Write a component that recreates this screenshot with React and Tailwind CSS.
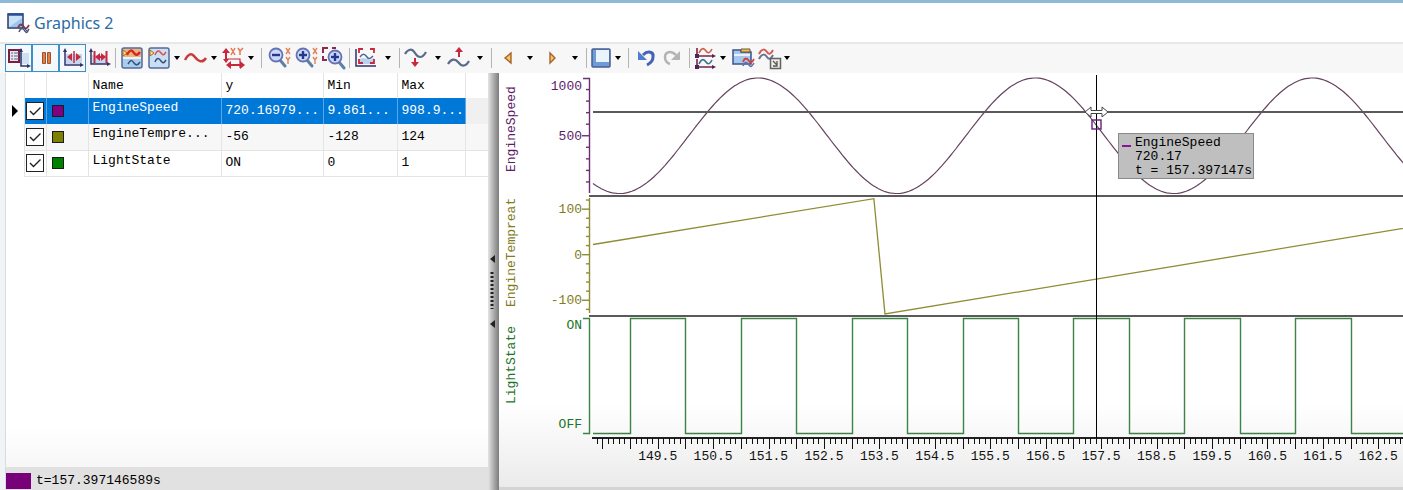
import { useEffect, useRef, useState } from 'react';

const NAVY = '#2f3268';
const RED = '#c8283c';

/* Toolbar icons, all on a 24 x 24 grid */
const Icon = ({ children }) => (
    <svg viewBox="0 0 24 24" className="w-6 h-6 shrink-0" fill="none" aria-hidden="true">
        {children}
    </svg>
);

const Axis = () => (
    <>
        <path d="M4 4V19H21" stroke={NAVY} strokeWidth="1.5" />
        <path d="M2 6L4 2L6 6ZM19 17L23 19L19 21Z" fill={NAVY} />
    </>
);

const LegendIcon = () => (
    <Icon>
        <path d="M13 7H22V18H13Z" fill="#cfe0f5" />
        <path d="M2 4H12V16H2Z" fill="#e9e6ee" stroke="#7c1f3f" strokeWidth="2" />
        <path d="M4 7H6M7 7H12M4 10H6M7 10H12M4 13H6M7 13H12" stroke="#55648c" />
        <path d="M14 3V20H22" stroke={NAVY} strokeWidth="1.5" />
        <path d="M12 6L14 2L16 6ZM20 18L24 20L20 22Z" fill={NAVY} />
    </Icon>
);

const PauseIcon = () => (
    <Icon>
        <path d="M8.5 6.5H11.5V17.5H8.5ZM13.5 6.5H16.5V17.5H13.5Z" fill="#e08040" stroke="#a5502c" />
    </Icon>
);

const CursorIcon = () => (
    <Icon>
        <path d="M5 8H21V18H5Z" fill="#c5d7f0" />
        <Axis />
        <path d="M13 5V17" stroke={RED} strokeWidth="1.5" />
        <path d="M11 7V15L6 11ZM15 7V15L20 11Z" fill={RED} />
    </Icon>
);

const DiffCursorIcon = () => (
    <Icon>
        <path d="M4 9H19V18H4Z" fill="#c5d7f0" />
        <path d="M3 4V18H21" stroke={NAVY} strokeWidth="1.5" />
        <path d="M1 6L3 2L5 6ZM19 16L23 18L19 20Z" fill={NAVY} />
        <path d="M6.5 5V17M18.5 5V17M8 11H17" stroke={RED} strokeWidth="2" />
        <path d="M12 7V15L7 11ZM13 7V15L18 11Z" fill={RED} />
    </Icon>
);

const SplitViewIcon = () => (
    <Icon>
        <rect x="2" y="2" width="20" height="20" rx="2" fill="#a9cdec" stroke="#536b9c" strokeWidth="1.5" />
        <path d="M3 3H21V11H3Z" fill="#f2b27c" />
        <path d="M3 4L7 7L3 10Z" fill="#ffe680" stroke="#a56a20" />
        <path d="M7 9C10 3 12 4 14 7S18 9 20 6" stroke="#d42a1c" strokeWidth="2.5" />
        <path d="M3 12H21" stroke="#fff" strokeWidth="1.5" />
        <path d="M8 18C11 13 12 14 14 17S18 19 20 16" stroke="#35517c" strokeWidth="1.5" />
    </Icon>
);

const OverlayViewIcon = () => (
    <Icon>
        <rect x="2" y="2" width="20" height="20" rx="2" fill="#cbdff4" stroke="#536b9c" strokeWidth="1.5" />
        <path d="M3 4L7 7L3 10Z" fill="#ffe680" stroke="#a56a20" />
        <path d="M8 9C10 4 12 4 14 7S17 9 19 6" stroke="#dd5548" strokeWidth="1.5" />
        <path d="M8 16C10 11 12 12 14 15S17 17 19 14" stroke="#35517c" strokeWidth="1.5" />
    </Icon>
);

const WaveIcon = () => (
    <Icon>
        <path d="M1 14C4 8 7 7 10 10C14 15 18 18 22 12" stroke="#c93a3a" strokeWidth="2.5" />
    </Icon>
);

const XYIcon = () => (
    <Icon>
        <path d="M5 5V14M9 19H20" stroke={RED} strokeWidth="2" />
        <path d="M1 7L5 2L9 7ZM2 13L5 17L8 13ZM10 15L5 19L10 23ZM19 15L24 19L19 23Z" fill={RED} />
        <path d="M4 13H19V22" stroke={RED} strokeWidth="1.2" />
        <path d="M10 2L14 9M14 2L10 9M17 2L19 5L22 2M19 5V9" stroke="#e27850" strokeWidth="1.5" />
    </Icon>
);

const Lens = ({ plus, x = 8, y = 9 }) => (
    <>
        <path d={`M${x + 4} ${y + 5}L${x + 9} ${y + 11}`} stroke="#5b81a6" strokeWidth="3" strokeLinecap="round" />
        <circle cx={x} cy={y} r="6.5" fill="#cbd9f5" stroke="#6572b8" strokeWidth="1.8" />
        <path d={`M${x - 4} ${y}H${x + 4}`} stroke="#27378c" strokeWidth="2.4" />
        {plus && <path d={`M${x} ${y - 4}V${y + 4}`} stroke="#27378c" strokeWidth="2.4" />}
    </>
);

const ZoomXYIcon = ({ plus }) => (
    <Icon>
        <Lens plus={plus} />
        <path d="M18 2L22 8M22 2L18 8M18 11L20 14L22 11M20 14V18" stroke="#e0835e" strokeWidth="1.4" />
    </Icon>
);

const ZoomAreaIcon = () => (
    <Icon>
        <path d="M1 7V2H6M10 2H14M1 10V14H5" stroke="#8f2950" strokeWidth="2" />
        <Lens plus x={13} y={11} />
    </Icon>
);

const FitIcon = () => (
    <Icon>
        <path d="M4 13L10 12L16 14L20 12V18H4Z" fill="#b5d2f1" />
        <path d="M2 3V20H22" stroke={NAVY} strokeWidth="1.5" />
        <path d="M5 7V3H9M16 3H20V7M5 13V17H9M16 17H20V13" stroke={RED} strokeWidth="1.8" />
        <path d="M6 11C9 7 11 8 13 11S17 12 19 10" stroke="#50678f" strokeWidth="1.5" />
    </Icon>
);

const WaveDownIcon = () => (
    <Icon>
        <path d="M1 8C4 3 8 2 11 7S18 13 22 6" stroke="#5b6b8c" strokeWidth="2.2" />
        <path d="M11 12V18" stroke={RED} strokeWidth="2" />
        <path d="M7 16H15L11 21Z" fill={RED} />
    </Icon>
);

const WaveUpIcon = () => (
    <Icon>
        <path d="M1 18C4 13 8 12 11 16S18 22 22 15" stroke="#5b6b8c" strokeWidth="2.2" />
        <path d="M12 5V11" stroke={RED} strokeWidth="2" />
        <path d="M8 6H16L12 1Z" fill={RED} />
    </Icon>
);

const PrevIcon = () => (
    <Icon>
        <path d="M15 7V17L9 12Z" fill="#f7c469" stroke="#a5642a" strokeWidth="1.4" />
    </Icon>
);

const NextIcon = () => (
    <Icon>
        <path d="M9 7V17L14 12Z" fill="#f7c469" stroke="#a5642a" strokeWidth="1.4" />
    </Icon>
);

const PanelIcon = () => (
    <Icon>
        <rect x="3" y="3" width="18" height="18" rx="1" fill="#6f9bd6" stroke="#4a5f91" strokeWidth="1.5" />
        <path d="M7 4H20V16H7Z" fill="#eaf4fd" />
    </Icon>
);

const UndoIcon = () => (
    <Icon>
        <path d="M8 9C13 4 19 6 18 11C18 14 16 17 12 19" stroke="#4263b6" strokeWidth="3" />
        <path d="M3 5V14H12Z" fill="#4f7dd0" />
    </Icon>
);

const RedoIcon = () => (
    <Icon>
        <path d="M16 9C11 4 5 6 5 11C5 14 7 17 10 18" stroke="#b4b4b4" strokeWidth="2.5" />
        <path d="M20 5V14H11Z" fill="#b4b4b4" />
    </Icon>
);

const StackedAxesIcon = () => (
    <Icon>
        <path d="M3 2V10H20M3 13V21H20" stroke="#7b2446" strokeWidth="1.6" />
        <path d="M1 8H5V12H1ZM1 19H5V23H1ZM18 8L22 10L18 12ZM18 19L22 21L18 23Z" fill="#4d2455" />
        <path d="M5 7C8 1 10 2 12 5S16 7 18 3" stroke="#d65a46" strokeWidth="1.6" />
        <path d="M5 18C8 12 10 13 12 16S16 18 18 14" stroke="#3c7186" strokeWidth="1.6" />
    </Icon>
);

const FolderIcon = () => (
    <Icon>
        <path d="M2 4H10V6H20V18H2Z" fill="#a6c8f0" stroke="#3e5488" strokeWidth="1.5" />
        <path d="M10 3H19V6H10Z" fill="#f0c050" stroke="#6e5632" />
        <path d="M3 9H19" stroke="#e7f3ff" strokeWidth="2" />
        <path d="M12 16C14 11 16 12 18 15S21 16 23 13" stroke="#d2403a" strokeWidth="1.8" />
        <path d="M12 20C14 15 16 16 18 19S21 20 23 17" stroke="#5e6fa8" strokeWidth="1.5" />
    </Icon>
);

const ExportIcon = () => (
    <Icon>
        <path d="M1 8C4 2 7 3 9 6S13 8 15 4" stroke="#d65a56" strokeWidth="2" />
        <path d="M1 13C4 7 7 8 9 11S13 13 15 9" stroke="#6a7390" strokeWidth="2" />
        <rect x="12.5" y="12.5" width="10" height="10" fill="#ecece6" stroke="#626262" strokeWidth="1.5" />
        <path d="M15 15L19 19M19 15V20H15" stroke="#555" strokeWidth="1.3" />
    </Icon>
);

const WindowIcon = () => (
    <svg viewBox="0 0 24 22" className="w-6 h-[22px] shrink-0" fill="none" aria-hidden="true">
        <rect x="2" y="2" width="15" height="14" fill="#c9e2f7" stroke="#33456f" strokeWidth="1.6" />
        <path d="M2 2.5H17" stroke="#2a4f96" strokeWidth="2.5" />
        <path d="M3 15L16 6V15Z" fill="#9cc6ec" />
        <path d="M12 16C14 11 16 12 18 15S21 16 23 13" stroke="#8c3448" strokeWidth="1.8" />
        <path d="M13 20C15 15 17 16 19 19S21 20 23 17" stroke="#45557a" strokeWidth="1.5" />
        <path d="M14 12L21 19" stroke="#45557a" />
    </svg>
);

const toolbar = [
    { icon: LegendIcon, label: 'Legend', framed: true },
    { icon: PauseIcon, label: 'Pause', framed: true },
    { icon: CursorIcon, label: 'Measurement cursor', framed: true },
    { icon: DiffCursorIcon, label: 'Difference cursor' },
    { sep: 'w-[5px]' },
    { icon: SplitViewIcon, label: 'Separate view' },
    { icon: OverlayViewIcon, label: 'Overlay view' },
    { menu: 'w-[10px]', label: 'View options' },
    { icon: WaveIcon, label: 'Line type' },
    { menu: 'w-[10px]', label: 'Line options' },
    { icon: XYIcon, label: 'Axis zoom' },
    { menu: 'w-[10px]', label: 'Axis options' },
    { sep: 'w-[10px]' },
    { icon: ZoomXYIcon, label: 'Zoom out' },
    { icon: ZoomXYIcon, plus: true, label: 'Zoom in' },
    { icon: ZoomAreaIcon, label: 'Zoom area' },
    { sep: 'w-[5px]' },
    { icon: FitIcon, label: 'Fit' },
    { menu: 'w-[18px]', label: 'Fit options' },
    { sep: 'w-[5px]' },
    { icon: WaveDownIcon, label: 'Move down' },
    { menu: 'w-[18px]', label: 'Move down options' },
    { icon: WaveUpIcon, label: 'Move up', width: 'w-6' },
    { menu: 'w-[18px]', label: 'Move up options' },
    { sep: 'w-[5px]' },
    { icon: PrevIcon, label: 'Previous' },
    { menu: 'w-[18px]', label: 'Previous options' },
    { icon: NextIcon, label: 'Next' },
    { menu: 'w-[18px]', label: 'Next options' },
    { sep: 'w-[5px]' },
    { icon: PanelIcon, label: 'Layout', width: 'w-6' },
    { menu: 'w-[10px]', label: 'Layout options' },
    { sep: 'w-[10px]' },
    { icon: UndoIcon, label: 'Undo' },
    { icon: RedoIcon, label: 'Redo', width: 'w-6' },
    { sep: 'w-[10px]' },
    { icon: StackedAxesIcon, label: 'Y axes', width: 'w-6' },
    { menu: 'w-[10px]', label: 'Y axes options' },
    { icon: FolderIcon, label: 'Open', width: 'w-[30px]' },
    { icon: ExportIcon, label: 'Export', width: 'w-6' },
    { menu: 'w-[10px]', label: 'Export options' },
];

const Toolbar = () => (
    <div className="h-[31px] flex items-center pl-[5px] pb-px bg-[#f7f7f7] border-t-2 border-[#e6e8ea]">
        {toolbar.map((item, i) => {
            if (item.sep) {
                return (
                    <div key={i} className={`${item.sep} shrink-0 flex justify-center`}>
                        <div className="w-px h-5 bg-[#b4b4b4]"></div>
                    </div>
                );
            }
            if (item.menu) {
                return (
                    <button key={i} aria-label={item.label} className={`${item.menu} h-7 shrink-0 flex items-center justify-center`}>
                        <svg viewBox="0 0 6 4" className="w-1.5 h-1 shrink-0">
                            <path d="M0 0H6L3 4Z" fill="#000" />
                        </svg>
                    </button>
                );
            }
            const ItemIcon = item.icon;
            return (
                <button
                    key={i}
                    aria-label={item.label}
                    className={`${item.width || 'w-[27px]'} h-7 shrink-0 flex items-center justify-center ${item.framed ? 'border border-[#3f8fc6] bg-[#f4f9fd]' : ''}`}
                >
                    <ItemIcon plus={item.plus} />
                </button>
            );
        })}
    </div>
);

const initialSignals = [
    { name: 'EngineSpeed', short: 'EngineSpeed', color: 'bg-[#800080]', y: '720.16979...', min: '9.861...', max: '998.9...', on: true },
    { name: 'EngineTempreature', short: 'EngineTempre...', color: 'bg-[#808000]', y: '-56', min: '-128', max: '124', on: true },
    { name: 'LightState', short: 'LightState', color: 'bg-[#008000]', y: 'ON', min: '0', max: '1', on: true },
];

const SignalTable = () => {
    const [signals, setSignals] = useState(initialSignals);
    const [selected, setSelected] = useState(0);

    const toggle = (index) => {
        setSignals(signals.map((s, i) => (i === index ? { ...s, on: !s.on } : s)));
    };

    return (
        <table className="w-full table-fixed border-collapse text-left whitespace-nowrap">
            <colgroup>
                <col className="w-[18px]" />
                <col className="w-[22px]" />
                <col className="w-[42px]" />
                <col className="w-[133px]" />
                <col className="w-[102px]" />
                <col className="w-[74px]" />
                <col className="w-[68px]" />
                <col />
            </colgroup>
            <thead>
                <tr className="h-[25px]">
                    <th className="border-r border-[#e4e4e4]"></th>
                    <th className="border-r border-[#e4e4e4]"></th>
                    <th className="border-r border-[#e4e4e4]"></th>
                    {['Name', 'y', 'Min', 'Max'].map((title) => (
                        <th key={title} className="p-0 pl-1 font-normal border-r border-[#e4e4e4]">{title}</th>
                    ))}
                    <th></th>
                </tr>
            </thead>
            <tbody>
                {signals.map((s, i) => {
                    const active = i === selected;
                    const cell = active
                        ? 'p-0 border-r border-[#5da6e6] bg-[#0078d7] text-white'
                        : `p-0 border-r border-b border-[#e4e4e4] ${i % 2 ? 'bg-[#f7f7f7]' : ''}`;
                    return (
                        <tr key={s.name} className="h-[26px]" onClick={() => setSelected(i)}>
                            <td className="p-0 border-r border-[#e4e4e4]">
                                {active && (
                                    <svg viewBox="0 0 6 12" className="w-1.5 h-3 ml-1.5">
                                        <path d="M0 0V12L6 6Z" fill="#000" />
                                    </svg>
                                )}
                            </td>
                            <td className={cell}>
                                <label className="relative block w-[18px] h-[18px] mx-auto">
                                    <input
                                        type="checkbox"
                                        aria-label={s.name}
                                        checked={s.on}
                                        onChange={() => toggle(i)}
                                        className="appearance-none block w-[18px] h-[18px] bg-white border border-[#222]"
                                    />
                                    {s.on && (
                                        <svg viewBox="0 0 18 18" className="absolute inset-0 pointer-events-none">
                                            <path d="M4 9L7.5 12.5L14.5 5.5" fill="none" stroke="#222" strokeWidth="1.4" />
                                        </svg>
                                    )}
                                </label>
                            </td>
                            <td className={cell}>
                                <div className={`w-3 h-3 ml-[5px] border border-[#1c1c1c] ${s.color}`}></div>
                            </td>
                            <td className={`${cell} align-top`}>
                                <div className="pl-1 leading-5">{s.short}</div>
                            </td>
                            <td className={cell}><div className="pl-1">{s.y}</div></td>
                            <td className={cell}><div className="pl-1">{s.min}</div></td>
                            <td className={cell}><div className="pl-1">{s.max}</div></td>
                            <td className={active ? 'p-0 bg-[#f0f0f0]' : `p-0 border-b border-[#e4e4e4] ${i % 2 ? 'bg-[#f7f7f7]' : ''}`}></td>
                        </tr>
                    );
                })}
            </tbody>
        </table>
    );
};

/* Chart: time axis in seconds, pixels measured from the chart's left edge */
const PX_PER_SEC = 55.43;
const PLOT_LEFT = 94;
const AXIS_X = 90.5;
const CURSOR_T = 157.4;

const xOf = (t) => 158.7 + (t - 149.5) * PX_PER_SEC;
const tOf = (x) => 149.5 + (x - 158.7) / PX_PER_SEC;
const speedY = (v) => 120.5 - v * 0.1155;
const tempY = (v) => 181.7 - v * 0.4555;

const speedPath = (tEnd) => {
    const points = [];
    for (let t = tOf(PLOT_LEFT); t < tEnd; t += 0.05) {
        const v = 500 + 500 * Math.cos((2 * Math.PI * (t - 151.31)) / 5);
        points.push(`${xOf(t).toFixed(1)},${speedY(v).toFixed(1)}`);
    }
    return points.join(' ');
};

const tempPath = (tEnd) => {
    const points = [`${PLOT_LEFT},171.5`];
    for (let t = 153.4; t < tEnd + 12.8; t += 12.8) {
        points.push(`${xOf(t)},${tempY(123)}`, `${xOf(t + 0.2)},${tempY(-130)}`);
    }
    return points.join(' ');
};

const lightPath = (tEnd) => {
    let d = `M${PLOT_LEFT} 360.5`;
    for (let t = 149; t < tEnd + 2; t += 2) {
        d += `H${Math.round(xOf(t)) + 0.5}V245.5H${Math.round(xOf(t + 1)) + 0.5}V360.5`;
    }
    return d;
};

const Chart = () => {
    const ref = useRef(null);
    const [width, setWidth] = useState(904);

    useEffect(() => {
        const observer = new ResizeObserver(([entry]) => setWidth(entry.contentRect.width));
        observer.observe(ref.current);
        return () => observer.disconnect();
    }, []);

    const tEnd = tOf(width) + 0.1;
    const ticks = [];
    for (let n = 1484; n / 10 < tEnd; n++) ticks.push(n);
    // only labels that fit completely
    const labels = ticks.filter((n) => n % 10 === 5 && n > 1485 && xOf(n / 10) + 20 <= width);

    return (
        <div ref={ref}>
            <svg className="block w-full h-[414px]" fill="none" fontSize="13" role="img" aria-label="Signal curves over time">
                {/* EngineSpeed */}
                <g stroke="#6b2f72" strokeWidth="1.4">
                    <path d={`M84 5.5H${AXIS_X}V120`} />
                    {[100, 200, 300, 400, 600, 700, 800, 900].map((v) => (
                        <path key={v} d={`M87 ${speedY(v)}H${AXIS_X}`} />
                    ))}
                    <path d={`M83 ${speedY(500)}H${AXIS_X}`} />
                    <polyline points={speedPath(tEnd)} stroke="#65435f" strokeWidth="1.2" />
                </g>
                <g fill="#5c1c68">
                    <text x="83" y="17" textAnchor="end">1000</text>
                    <text x="83" y="67" textAnchor="end">500</text>
                    <text transform="translate(16 99) rotate(-90)">EngineSpeed</text>
                </g>

                {/* EngineTempreature */}
                <g stroke="#8f8c34" strokeWidth="1.4">
                    <path d={`M${AXIS_X} 125V240`} />
                    {[-120, -80, -60, -40, -20, 20, 40, 60, 80, 120].map((v) => (
                        <path key={v} d={`M87 ${tempY(v)}H${AXIS_X}`} />
                    ))}
                    {[-100, 0, 100].map((v) => (
                        <path key={v} d={`M83 ${tempY(v)}H${AXIS_X}`} />
                    ))}
                    <polyline points={tempPath(tEnd)} strokeWidth="1.3" />
                </g>
                <g fill="#7f7c1c">
                    {[-100, 0, 100].map((v) => (
                        <text key={v} x="83" y={Math.round(tempY(v)) + 4} textAnchor="end">{v}</text>
                    ))}
                    <text transform="translate(16 234) rotate(-90)">EngineTempreat</text>
                </g>

                {/* LightState */}
                <g stroke="#3c8444" strokeWidth="1.4">
                    <path d={`M84 245.5H${AXIS_X}V360.5H84`} />
                    <path d={lightPath(tEnd)} />
                </g>
                <g fill="#1c7428">
                    <text x="83" y="256" textAnchor="end">ON</text>
                    <text x="83" y="355" textAnchor="end">OFF</text>
                    <text transform="translate(16 331) rotate(-90)">LightState</text>
                </g>

                {/* Separators and level line */}
                <rect x="90" y="122" width="100%" height="2" fill="#5a5a5a" />
                <rect x="90" y="242" width="100%" height="2" fill="#5a5a5a" />
                <rect x={PLOT_LEFT} y="38" width="100%" height="2" fill="#5a5a5a" />

                {/* Time axis */}
                <rect x="93" y="364" width="100%" height="2" fill="#222" />
                {ticks.map((n) => (
                    <rect
                        key={n}
                        x={Math.round(xOf(n / 10))}
                        y="365"
                        width="1"
                        height={n % 5 === 0 ? 11 : 6}
                        fill="#111"
                    />
                ))}
                {labels.map((n) => (
                    <text key={n} x={xOf(n / 10)} y="387" textAnchor="middle" fill="#111">{(n / 10).toFixed(1)}</text>
                ))}

                {/* Measurement cursor */}
                <path d={`M${Math.round(xOf(CURSOR_T)) + 0.5} 2V365`} stroke="#000" />
                <rect x="593" y="47" width="9" height="9" stroke="#6b1c78" strokeWidth="1.4" />
                <path
                    d="M586 39L592 34V37.5H603V34L609 39L603 44V40.5H592V44Z"
                    fill="#fff"
                    stroke="#444"
                />
            </svg>
        </div>
    );
};

const Splitter = () => (
    <div className="w-[11px] shrink-0 bg-linear-to-r from-[#e4e4e4] to-[#7c7c7c]">
        <svg viewBox="0 0 11 80" className="w-[11px] h-20 mt-[178px]" aria-hidden="true">
            <path d="M7 4V12L2 8ZM7 69V77L2 73Z" fill="#222" />
            <path d="M4 21V58" stroke="#222" strokeWidth="3" strokeDasharray="2 2" />
        </svg>
    </div>
);

const App = () => (
    <div className="min-h-screen flex flex-col bg-white text-black text-[13px] leading-4 font-['Liberation_Mono',monospace]">
        {/* Title */}
        <header className="h-[42px] flex items-center pl-1.5 gap-1 border-t-3 border-[#8fb9d6]">
            <WindowIcon />
            <h1 className="text-[16px] leading-6 text-[#2b6ca3] font-['Noto_Sans',sans-serif]">Graphics 2</h1>
        </header>

        <Toolbar />

        <main className="flex-1 flex min-h-0 pl-[5px] bg-[#f1f4f7]">
            {/* Signal list */}
            <section className="w-[483px] shrink-0 flex flex-col bg-linear-to-b from-white from-85% to-[#f2f2f2] border-l border-[#d8dce0]">
                <SignalTable />
                <div className="mt-auto h-[23px] flex items-end gap-[5px] pb-px bg-[#e1e1e1]">
                    <div className="w-[25px] h-4 bg-[#780078]"></div>
                    <span>t=157.397146589s</span>
                </div>
            </section>

            <Splitter />

            {/* Curves */}
            <section className="relative flex-1 min-w-0 overflow-hidden bg-linear-to-b from-white from-80% to-[#ebebeb] border-b-3 border-[#d4d4d4]">
                <Chart />
                <div className="absolute left-[619px] top-[60px] w-[136px] h-[46px] pl-4 pt-0.5 leading-[14px] bg-[#bfbfbf] border border-[#8a8a8a] whitespace-pre">
                    <div className="absolute left-[3px] top-[11px] w-[9px] h-0.5 bg-[#8c1490]"></div>
                    <p>EngineSpeed</p>
                    <p>720.17</p>
                    <p>t = 157.397147s</p>
                </div>
            </section>
        </main>
    </div>
);

export default App;
